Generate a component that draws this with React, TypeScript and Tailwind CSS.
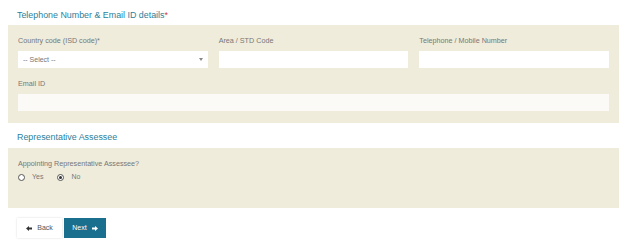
import { useState } from 'react';

const font = { fontFamily: '"Liberation Sans", Arial, sans-serif' };

function Label({ children }: { children: React.ReactNode }) {
  return <label className="block h-[10px] text-[7.2px] leading-[10px] text-[#777]">{children}</label>;
}

function Input() {
  return <input className="mt-[5px] block h-[17px] w-full bg-white px-2 text-[7px] outline-none" />;
}

export default function App() {
  const [rep, setRep] = useState('no');

  return (
    <div className="h-[243px] w-[630px] bg-white" style={font}>
      <div className="pl-[8px] pr-[11px] pt-[9px]">
        <h2 className="h-[16px] pl-[9px] text-[8.9px] leading-[12px] text-[#2b7f9c]">
          Telephone Number &amp; Email ID details<span className="text-[#d9363e]">*</span>
        </h2>

        <div className="bg-[#efecdb] px-[10px] pb-[12px] pt-[11px]">
          <div className="grid grid-cols-3 gap-x-[11px]">
            <div>
              <Label>
                Country code (ISD code)<span>*</span>
              </Label>
              <div className="relative mt-[5px] h-[17px] bg-white">
                <span className="absolute left-[5px] top-[4px] text-[7px] leading-[9px] text-[#777]">-- Select --</span>
                <svg className="absolute right-[5px] top-[7px]" width="4" height="3" viewBox="0 0 4 3">
                  <path d="M0 0 L4 0 L2 3 Z" fill="#888" />
                </svg>
              </div>
            </div>
            <div>
              <Label>Area / STD Code</Label>
              <Input />
            </div>
            <div>
              <Label>Telephone / Mobile Number</Label>
              <Input />
            </div>
          </div>

          <div className="mt-[11px]">
            <Label>Email ID</Label>
            <div className="mt-[5px] h-[17px] w-full bg-[#fbfaf6]" />
          </div>
        </div>

        <h2 className="mt-[8px] h-[17px] pl-[9px] text-[8.9px] leading-[12px] text-[#2b7f9c]">
          Representative Assessee
        </h2>

        <div className="h-[60px] bg-[#efecdb] px-[10px] pt-[11px]">
          <Label>Appointing Representative Assessee?</Label>
          <div className="mt-[3px] flex items-center gap-[14px] text-[7px] text-[#777]">
            <label className="flex items-center gap-[7px]" onClick={() => setRep('yes')}>
              <span className="flex h-[7px] w-[7px] items-center justify-center rounded-full border border-[#555] bg-white">
                {rep === 'yes' && <span className="h-[3px] w-[3px] rounded-full bg-[#333]" />}
              </span>
              Yes
            </label>
            <label className="flex items-center gap-[7px]" onClick={() => setRep('no')}>
              <span className="flex h-[7px] w-[7px] items-center justify-center rounded-full border border-[#555] bg-white">
                {rep === 'no' && <span className="h-[3px] w-[3px] rounded-full bg-[#333]" />}
              </span>
              No
            </label>
          </div>
        </div>

        <div className="mt-[10px] flex gap-[2px] pl-[9px]">
          <button className="flex h-[20px] w-[45px] items-center justify-center gap-[5px] bg-white text-[7px] text-[#555] shadow-[0_0_2px_rgba(0,0,0,0.15)]">
            <svg width="6" height="5" viewBox="0 0 6 5">
              <path d="M0 2.5 L3 0 L3 1.6 L6 1.6 L6 3.4 L3 3.4 L3 5 Z" fill="#333" />
            </svg>
            Back
          </button>
          <button className="flex h-[20px] w-[42px] items-center justify-center gap-[5px] bg-[#1b6f8e] text-[7px] text-white">
            Next
            <svg width="6" height="5" viewBox="0 0 6 5">
              <path d="M6 2.5 L3 0 L3 1.6 L0 1.6 L0 3.4 L3 3.4 L3 5 Z" fill="#fff" />
            </svg>
          </button>
        </div>
      </div>
    </div>
  );
}
